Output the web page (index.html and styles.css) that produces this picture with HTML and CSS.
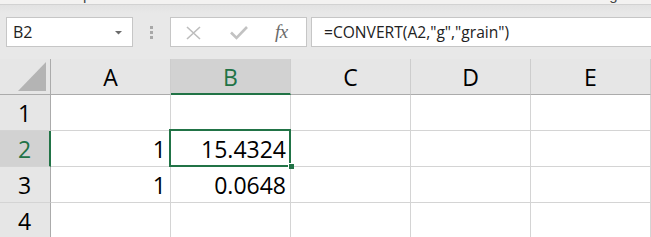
FILE: index.html
```html
<!DOCTYPE html>
<html>
<head>
<meta charset="utf-8">
<link rel="stylesheet" href="styles.css">
</head>
<body>
<div class="ribbon"><span class="frag f1">p</span><span class="frag f2">g</span></div>
<div class="fbar">
  <div class="namebox">
    <span class="nb-text">B2</span>
    <svg class="nb-arrow" width="8" height="4" viewBox="0 0 8 4"><polygon points="0,0 7,0 3.5,3.5" fill="#6b6b6b"/></svg>
  </div>
  <div class="dots"><i></i><i></i><i></i></div>
  <div class="btns">
    <svg class="ic-x" width="15" height="14" viewBox="0 0 15 14"><path d="M1 1 L14 13 M14 1 L1 13" stroke="#bdbdbd" stroke-width="1.6" fill="none"/></svg>
    <svg class="ic-ok" width="18" height="14" viewBox="0 0 18 14"><path d="M1 6.5 L6.5 12 L17 1" stroke="#c2c2c2" stroke-width="2.6" fill="none"/></svg>
    <span class="fx">fx</span>
  </div>
  <div class="formula">=CONVERT(A2,"g","grain")</div>
</div>
<div class="sheet">
  <div class="corner"><svg width="50" height="36" viewBox="0 0 50 36"><polygon points="18,33 46,33 46,4" fill="#b4b4b4"/></svg></div>
  <div class="ch">A</div>
  <div class="ch sel">B</div>
  <div class="ch">C</div>
  <div class="ch">D</div>
  <div class="ch">E</div>

  <div class="rh">1</div>
  <div class="c"></div><div class="c"></div><div class="c"></div><div class="c"></div><div class="c"></div>

  <div class="rh sel">2</div>
  <div class="c num">1</div><div class="c num active">15.4324<span class="handle"></span></div><div class="c"></div><div class="c"></div><div class="c"></div>

  <div class="rh">3</div>
  <div class="c num">1</div><div class="c num">0.0648</div><div class="c"></div><div class="c"></div><div class="c"></div>

  <div class="rh">4</div>
  <div class="c"></div><div class="c"></div><div class="c"></div><div class="c"></div><div class="c"></div>
</div>
</body>
</html>
```
FILE: styles.css
```css
html, body {
  margin: 0;
  padding: 0;
}
body {
  width: 651px;
  height: 237px;
  overflow: hidden;
  background: #ffffff;
  font-family: "Open Sans", "Liberation Sans", sans-serif;
}
.ribbon {
  height: 4px;
  background: #f3f2f1;
  border-bottom: 1px solid #d2d2d2;
  overflow: hidden;
  display: flex;
  font-family: "Liberation Sans", sans-serif;
  font-size: 15px;
  line-height: 15px;
  color: #444;
}
.frag {
  margin-top: -13px;
}
.f1 { margin-left: 83px; }
.f2 { margin-left: 518px; }

.fbar {
  height: 54px;
  box-sizing: border-box;
  background: linear-gradient(#e2e2e2, #e8e8e8 8px, #e8e8e8);
  display: flex;
  align-items: flex-start;
  padding: 12px 0 0 6px;
  overflow: hidden;
}
.fbar > * {
  flex-shrink: 0;
}
.namebox {
  width: 127px;
  height: 30px;
  box-sizing: border-box;
  border: 1px solid #c6c6c6;
  background: #fff;
  display: flex;
  align-items: center;
  padding-left: 6px;
  font-size: 16px;
  color: #222;
}
.nb-text { flex: 1; }
.nb-arrow { margin-right: 9px; margin-top: 2px; }
.dots {
  margin-left: 17px;
  width: 3px;
  height: 30px;
  display: flex;
  flex-direction: column;
  justify-content: center;
  gap: 2px;
}
.dots i {
  display: block;
  width: 3px;
  height: 3px;
  background: #a8a8a8;
}
.btns {
  margin-left: 17px;
  width: 137px;
  height: 30px;
  box-sizing: border-box;
  border: 1px solid #c6c6c6;
  background: #fff;
  display: flex;
  align-items: center;
}
.ic-x { margin-left: 15px; margin-top: 2px; }
.ic-ok { margin-left: 29px; margin-top: 2px; }
.fx {
  margin-left: 27px;
  font-family: "Liberation Serif", serif;
  font-style: italic;
  font-size: 19px;
  color: #6a6a6a;
  letter-spacing: -0.5px;
}
.formula {
  margin-left: 4px;
  width: 360px;
  height: 30px;
  box-sizing: border-box;
  border: 1px solid #c6c6c6;
  border-right: none;
  background: #fff;
  display: flex;
  align-items: center;
  padding-left: 12px;
  font-size: 15.6px;
  color: #222;
}

.sheet {
  display: grid;
  grid-template-columns: 51px repeat(5, 120px);
  grid-template-rows: 36px repeat(4, 36px);
  font-size: 23px;
  color: #000;
}
.sheet > div {
  box-sizing: border-box;
  display: flex;
  align-items: flex-end;
  line-height: 23px;
}
.corner {
  background: #e6e6e6;
  border-right: 1px solid #ababab;
  border-bottom: 1px solid #ababab;
}
.corner svg { display: block; }
.ch {
  background: #e6e6e6;
  border-right: 1px solid #cdcdcd;
  border-bottom: 1px solid #ababab;
  justify-content: center;
  padding-bottom: 5px;
}
.ch.sel {
  background: #d2d2d2;
  color: #217346;
  border-bottom: 2px solid #217346;
  padding-bottom: 4px;
}
.rh {
  background: #e6e6e6;
  border-right: 1px solid #ababab;
  border-bottom: 1px solid #d4d4d4;
  justify-content: center;
  padding-bottom: 5px;
  padding-right: 1px;
}
.rh.sel {
  background: #d2d2d2;
  color: #217346;
  border-right: 2px solid #217346;
  padding-right: 0;
}
.c {
  border-right: 1px solid #d4d4d4;
  border-bottom: 1px solid #d4d4d4;
  padding-bottom: 5px;
}
.num {
  justify-content: flex-end;
  padding-right: 4px;
}
.active {
  position: relative;
}
.active::before {
  content: "";
  position: absolute;
  left: -2px;
  top: -2px;
  right: -1px;
  bottom: -1px;
  border: 2px solid #217346;
}
.handle {
  position: absolute;
  right: -4px;
  bottom: -3px;
  width: 5px;
  height: 5px;
  background: #217346;
  border: 1px solid #fff;
  border-right: none;
  border-bottom: none;
}
```
